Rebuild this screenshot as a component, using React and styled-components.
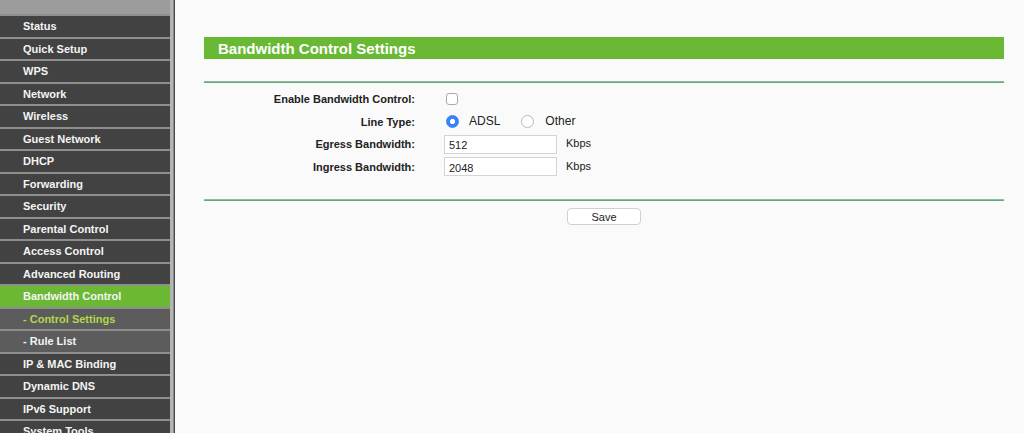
import React from "react";
import styled, { createGlobalStyle } from "styled-components";

const Global = createGlobalStyle`
  html, body { margin: 0; padding: 0; height: 100%; overflow: hidden; background: #fafafa; }
  body { font-family: "Liberation Sans", Arial, sans-serif; }
  * { box-sizing: border-box; }
`;

const Page = styled.div`
  display: flex;
  height: 433px;
  overflow: hidden;
`;

const Sidebar = styled.nav`
  flex: 0 0 173px;
  background: #9c9c9c;
  border-right: 3px solid #b4b4b4;
  box-shadow: 1px 0 0 #8a8a8a, 2px 0 0 #4a4a4a;
  position: relative;
  z-index: 1;
  display: flex;
  flex-direction: column;
  padding-top: 14px;
`;

const MenuItem = styled.div`
  flex: 0 0 auto;
  height: 22.5px;
  border-top: 2px solid #8e8e8e;
  background: ${(p) => (p.$active ? "#6ab833" : p.$sub ? "#5c5c5c" : "#424242")};
  color: ${(p) => (p.$current ? "#b2d84a" : "#f4f4f4")};
  font-size: 11px;
  font-weight: bold;
  display: flex;
  align-items: center;
  padding-left: 23px;
  white-space: nowrap;
`;

const Main = styled.main`
  flex: 1;
  background: #fafafa;
  padding: 37px 20px 0 31px;
`;

const Panel = styled.section`
  width: 800px;
  display: flex;
  flex-direction: column;
`;

const TitleBar = styled.h1`
  margin: 0;
  height: 22px;
  background: #6ab934;
  color: #fff;
  font-size: 15px;
  font-weight: bold;
  display: flex;
  align-items: center;
  padding-left: 14px;
`;

const Rule = styled.div`
  height: 2px;
  background: #6aa583;
  border-top: 1px solid #8dbf9f;
  margin-top: ${(p) => p.$top}px;
`;

const Form = styled.div`
  display: grid;
  grid-template-columns: 211px 1fr;
  column-gap: 29px;
  grid-auto-rows: 22.5px;
  padding-top: 5px;
`;

const Label = styled.div`
  font-size: 11px;
  font-weight: bold;
  color: #222;
  text-align: right;
  display: flex;
  align-items: center;
  justify-content: flex-end;
`;

const Control = styled.div`
  display: flex;
  align-items: center;
  font-size: 11px;
  color: #222;
`;

const Check = styled.input.attrs({ type: "checkbox" })`
  appearance: none;
  margin: 0 0 0 2px;
  width: 12px;
  height: 12px;
  border: 1px solid #a9a9a9;
  border-radius: 3px;
  background: #fff;
`;

const Radio = styled.input.attrs({ type: "radio" })`
  appearance: none;
  margin: 0 0 0 ${(p) => p.$ml || 0}px;
  width: 13px;
  height: 13px;
  border-radius: 50%;
  border: 1px solid ${(p) => (p.checked ? "#3a82f7" : "#b8b8b8")};
  background: ${(p) =>
    p.checked ? "radial-gradient(circle, #fff 0 2.4px, #3a82f7 2.9px)" : "#fff"};
`;

const RadioText = styled.span`
  margin-left: ${(p) => p.$ml}px;
  font-size: 12px;
  position: relative;
  top: -1px;
`;

const TextInput = styled.input.attrs({ type: "text" })`
  width: 113px;
  height: 19px;
  margin: 0;
  border: 1px solid #d4d4d4;
  background: #fff;
  font-family: "Liberation Sans", Arial, sans-serif;
  font-size: 11px;
  color: #222;
  padding: 2px 4px 0;
  outline: none;
`;

const Unit = styled.span`
  margin-left: 9px;
  font-size: 11px;
  position: relative;
  top: -1px;
`;

const Footer = styled.div`
  display: flex;
  justify-content: center;
  padding-top: 7px;
`;

const SaveButton = styled.button`
  width: 74px;
  height: 17px;
  background: #fff;
  border: 1px solid #d0d0d0;
  border-radius: 4px;
  font-family: "Liberation Sans", Arial, sans-serif;
  font-size: 11px;
  color: #222;
  padding: 0;
`;

const menu = [
  { t: "Status" },
  { t: "Quick Setup" },
  { t: "WPS" },
  { t: "Network" },
  { t: "Wireless" },
  { t: "Guest Network" },
  { t: "DHCP" },
  { t: "Forwarding" },
  { t: "Security" },
  { t: "Parental Control" },
  { t: "Access Control" },
  { t: "Advanced Routing" },
  { t: "Bandwidth Control", active: true },
  { t: "- Control Settings", sub: true, current: true },
  { t: "- Rule List", sub: true },
  { t: "IP & MAC Binding" },
  { t: "Dynamic DNS" },
  { t: "IPv6 Support" },
  { t: "System Tools" },
];

export default function App() {
  return (
    <Page>
      <Global />
      <Sidebar>
        {menu.map((m) => (
          <MenuItem key={m.t} $active={m.active} $sub={m.sub} $current={m.current}>
            {m.t}
          </MenuItem>
        ))}
      </Sidebar>
      <Main>
        <Panel>
          <TitleBar>Bandwidth Control Settings</TitleBar>
          <Rule $top={22} />
          <Form>
            <Label>Enable Bandwidth Control:</Label>
            <Control>
              <Check />
            </Control>
            <Label>Line Type:</Label>
            <Control>
              <Radio name="lt" checked readOnly $ml={2} />
              <RadioText $ml={10}>ADSL</RadioText>
              <Radio name="lt" checked={false} readOnly $ml={21} />
              <RadioText $ml={11}>Other</RadioText>
            </Control>
            <Label>Egress Bandwidth:</Label>
            <Control>
              <TextInput defaultValue="512" />
              <Unit>Kbps</Unit>
            </Control>
            <Label>Ingress Bandwidth:</Label>
            <Control>
              <TextInput defaultValue="2048" />
              <Unit>Kbps</Unit>
            </Control>
          </Form>
          <Rule $top={21} />
          <Footer>
            <SaveButton>Save</SaveButton>
          </Footer>
        </Panel>
      </Main>
    </Page>
  );
}
